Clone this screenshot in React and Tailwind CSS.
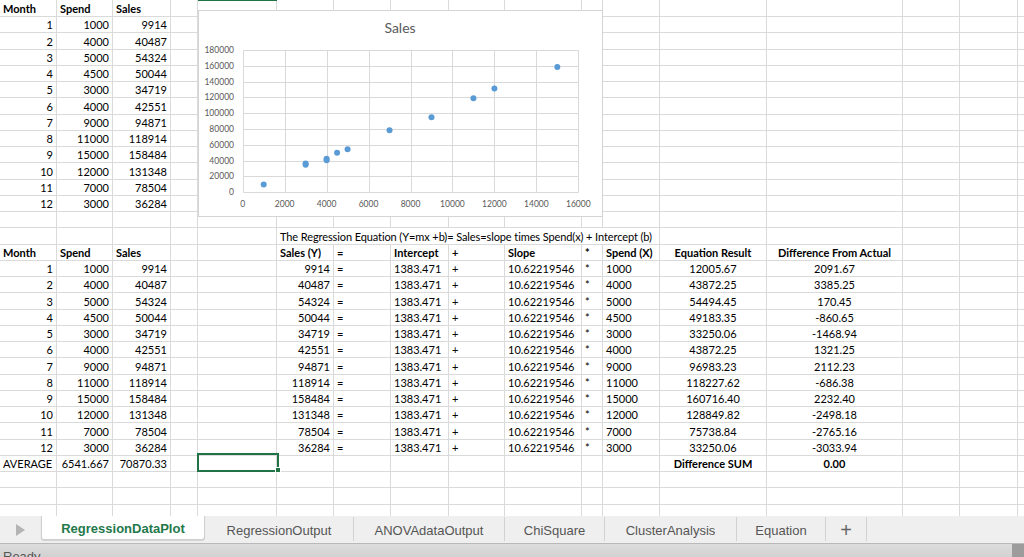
import React from "react";

const widths = [
  "w-[57px]", "w-[56px]", "w-[58px]", "w-[27px]", "w-[79px]", "w-[57px]", "w-[57px]", "w-[58px]",
  "w-[56px]", "w-[77px]", "w-[21px]", "w-[57px]", "w-[107px]", "w-[136px]", "w-[57px]", "w-[58px]", "w-[60px]",
];

const spend = [1000, 4000, 5000, 4500, 3000, 4000, 9000, 11000, 15000, 12000, 7000, 3000];
const sales = [9914, 40487, 54324, 50044, 34719, 42551, 94871, 118914, 158484, 131348, 78504, 36284];
const results = ["12005.67", "43872.25", "54494.45", "49183.35", "33250.06", "43872.25", "96983.23", "118227.62", "160716.40", "128849.82", "75738.84", "33250.06"];
const diffs = ["2091.67", "3385.25", "170.45", "-860.65", "-1468.94", "1321.25", "2112.23", "-686.38", "2232.40", "-2498.18", "-2765.16", "-3033.94"];

const L = (t, b) => ({ t, a: "left", b });
const R = (t, b) => ({ t, a: "right", b });
const C = (t, b) => ({ t, a: "center", b });

// build sheet rows: each row is an array of 17 cells (null = empty)
const rows = [];
const empty = () => Array(17).fill(null);

let r = empty();
r[0] = L("Month", true); r[1] = L("Spend", true); r[2] = L("Sales", true);
rows.push(r);
for (let i = 0; i < 12; i++) {
  r = empty();
  r[0] = R(i + 1); r[1] = R(spend[i]); r[2] = R(sales[i]);
  rows.push(r);
}
rows.push(empty());
r = empty();
r.title = "The Regression Equation (Y=mx +b)= Sales=slope times Spend(x) + Intercept (b)";
rows.push(r);
r = empty();
r[0] = L("Month", true); r[1] = L("Spend", true); r[2] = L("Sales", true);
r[5] = L("Sales (Y)", true); r[6] = L("=", true); r[7] = L("Intercept", true); r[8] = L("+", true);
r[9] = L("Slope", true); r[10] = L("*", true); r[11] = L("Spend (X)", true);
r[12] = C("Equation Result", true); r[13] = C("Difference From Actual", true);
rows.push(r);
for (let i = 0; i < 12; i++) {
  r = empty();
  r[0] = R(i + 1); r[1] = R(spend[i]); r[2] = R(sales[i]);
  r[5] = R(sales[i]); r[6] = L("="); r[7] = L("1383.471"); r[8] = L("+");
  r[9] = L("10.62219546"); r[10] = L("*"); r[11] = L(spend[i]);
  r[12] = C(results[i]); r[13] = C(diffs[i]);
  rows.push(r);
}
r = empty();
r[0] = L("AVERAGE"); r[1] = R("6541.667"); r[2] = R("70870.33");
r[12] = C("Difference SUM", true); r[13] = C("0.00", true);
rows.push(r);
for (let i = 0; i < 3; i++) rows.push(empty());

const alignCls = { left: "justify-start", right: "justify-end", center: "justify-center" };

function Cell({ w, cell }) {
  return (
    <div className={`${w} shrink-0 h-full border-r border-b border-[#dadada] px-[3px] flex items-end whitespace-nowrap ${cell ? alignCls[cell.a] : ""}`}>
      {cell && (
        <span className={`leading-[15px] ${cell.b ? "font-bold" : ""}`}>{cell.t}</span>
      )}
    </div>
  );
}

function SheetRow({ row, index }) {
  const h = index === 0 ? "h-[17px]" : index % 4 === 2 ? "h-[17px]" : "h-4";
  if (row.title) {
    return (
      <div className={`flex ${h}`}>
        {widths.slice(0, 5).map((w, i) => <Cell key={i} w={w} cell={null} />)}
        <div className="w-[383px] shrink-0 h-full border-r border-b border-[#dadada] px-[3px] flex items-end whitespace-nowrap">
          <span className="leading-[15px] tracking-[-0.1px]">{row.title}</span>
        </div>
        {widths.slice(12).map((w, i) => <Cell key={i} w={w} cell={null} />)}
      </div>
    );
  }
  return (
    <div className={`flex ${h}`}>
      {widths.map((w, i) => <Cell key={i} w={w} cell={row[i]} />)}
    </div>
  );
}

function SalesChart() {
  const px = (x) => 43.7 + x * 0.020975;
  const py = (y) => 181.3 - y * 0.00079056;
  const xs = [0, 2000, 4000, 6000, 8000, 10000, 12000, 14000, 16000];
  const ys = [0, 20000, 40000, 60000, 80000, 100000, 120000, 140000, 160000, 180000];
  return (
    <div className="absolute left-[198px] top-[10px] w-[405px] h-[207px] bg-white border border-[#d4d4d4]">
      <svg width="403" height="205" className="block font-['Lato',sans-serif]">
        <text x="201" y="22" textAnchor="middle" fontSize="14" fill="#595959">Sales</text>
        {xs.map((x) => (
          <line key={"v" + x} x1={Math.round(px(x)) + 0.5} x2={Math.round(px(x)) + 0.5} y1={Math.round(py(180000)) + 0.5} y2={Math.round(py(0)) + 0.5} stroke="#d9d9d9" />
        ))}
        {ys.map((y) => (
          <line key={"h" + y} x1={Math.round(px(0)) + 0.5} x2={Math.round(px(16000)) + 0.5} y1={Math.round(py(y)) + 0.5} y2={Math.round(py(y)) + 0.5} stroke="#d9d9d9" />
        ))}
        {ys.map((y) => (
          <text key={"yl" + y} x="35" y={py(y) + 3} textAnchor="end" fontSize="8.5" fill="#595959">{y}</text>
        ))}
        {xs.map((x) => (
          <text key={"xl" + x} x={px(x)} y="196" textAnchor="middle" fontSize="8.5" fill="#595959">{x}</text>
        ))}
        {spend.map((s, i) => (
          <circle key={i} cx={px(s)} cy={py(sales[i])} r="3" fill="#5b9bd5" />
        ))}
      </svg>
    </div>
  );
}

const tabs = [
  { name: "RegressionOutput", w: "w-[149px]" },
  { name: "ANOVAdataOutput", w: "w-[151px]" },
  { name: "ChiSquare", w: "w-[100px]" },
  { name: "ClusterAnalysis", w: "w-[132px]" },
  { name: "Equation", w: "w-[89px]" },
];

export default function App() {
  return (
    <div className="w-[1024px] h-[557px] overflow-hidden bg-white flex flex-col">
      {/* sheet grid */}
      <div className="relative h-[516px] shrink-0 overflow-hidden text-[11px] text-black font-['Lato',sans-serif]">
        {rows.map((row, i) => <SheetRow key={i} row={row} index={i} />)}

        {/* selected column marker */}
        <div className="absolute left-[198px] top-0 w-[79px] h-px bg-[#217346]" />

        <SalesChart />

        {/* active cell */}
        <div className="absolute left-[197px] top-[453px] w-[82px] h-[19px] border-2 border-[#217346]" />
        <div className="absolute left-[275px] top-[467px] w-[6px] h-[6px] bg-[#217346] border border-white" />
      </div>

      {/* sheet tabs */}
      <div className="h-[28px] shrink-0 bg-[#efefef] border-b border-[#b9b9b9] flex items-start font-['Liberation_Sans',Arial,sans-serif] text-[13px] text-[#555]">
        <div className="w-[41px] h-full flex items-center justify-center">
          <svg width="9" height="12" viewBox="0 0 9 12">
            <polygon points="0,0 9,6 0,12" fill="#b4b4b4" />
          </svg>
        </div>
        <div className="w-[164px] h-[24px] pt-[2px] bg-white rounded-b-[3px] border-x border-b border-[#cfcfcf] shadow-[0_1px_1px_rgba(0,0,0,0.12)] flex items-center justify-center font-bold text-[#23784a]">
          RegressionDataPlot
        </div>
        {tabs.map((t) => (
          <div key={t.name} className={`${t.w} h-[24px] pt-[3px] mt-[1px] border-r border-[#d2d2d2] flex items-center justify-center`}>
            {t.name}
          </div>
        ))}
        <div className="w-[41px] h-[24px] pt-[2px] mt-[1px] border-r border-[#d2d2d2] flex items-center justify-center text-[20px] text-[#666] font-light">
          +
        </div>
      </div>

      {/* status bar */}
      <div className="flex-1 bg-gradient-to-b from-[#dcdcdc] to-[#d2d2d2] flex overflow-hidden font-['Liberation_Sans',Arial,sans-serif] text-[13px] text-[#555]">
        <div className="flex-1 pl-[3px] pt-[5px] leading-[15px]">Ready</div>
        <div className="w-[12px] bg-[#9c9c9c]" />
      </div>
    </div>
  );
}
